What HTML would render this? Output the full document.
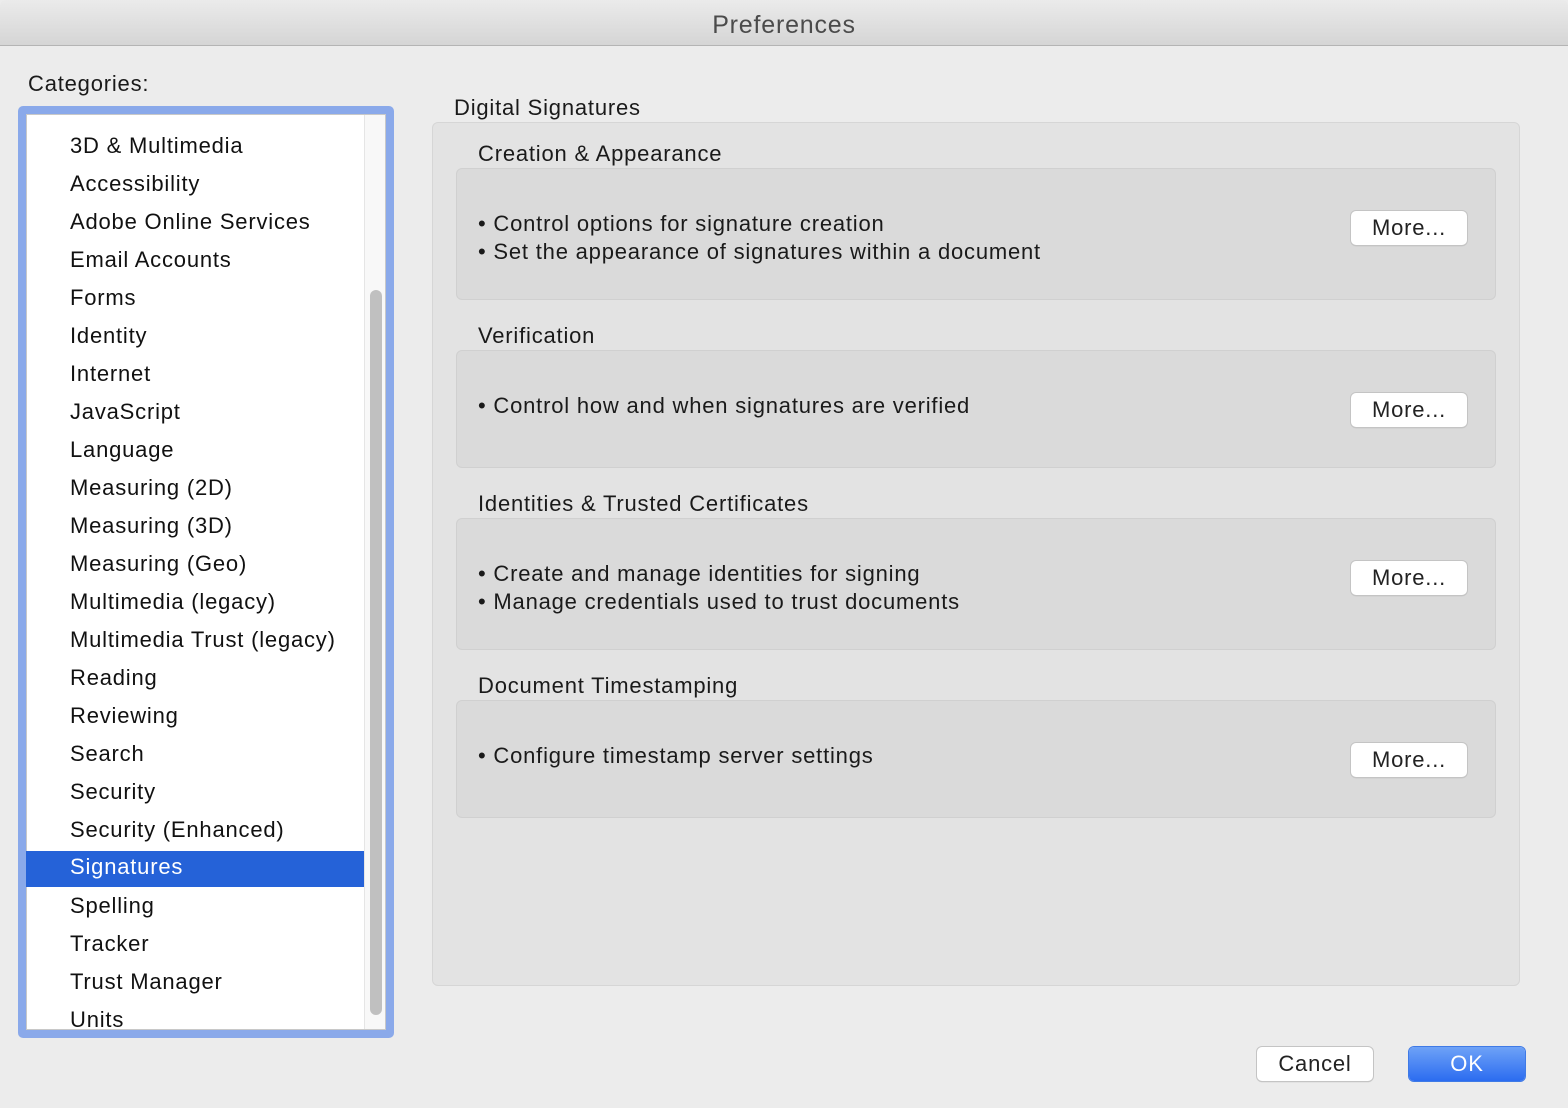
<!DOCTYPE html>
<html><head><style>
*{margin:0;padding:0;box-sizing:border-box}
body{width:1568px;height:1108px;background:#ececec;font-family:"Liberation Sans",sans-serif;color:#1a1a1a;position:relative;overflow:hidden;font-size:22px;letter-spacing:0.8px}
.abs{position:absolute}
.title{left:0;top:0;width:1568px;height:46px;background:linear-gradient(#ebebeb,#d5d5d5);border-bottom:1px solid #b4b4b4;text-align:center;font-size:25px;line-height:50px;color:#4b4b4b;border-radius:6px 6px 0 0}
.t{white-space:nowrap}
.ring{left:18px;top:106px;width:376px;height:932px;border:4px solid #8aa9ea;border-radius:5px;background:#8aa9ea}
.list{left:26px;top:114px;width:360px;height:916px;background:#fff;border:1px solid #c8c8c8;overflow:hidden}
.list div{position:absolute;left:43px;height:38px;line-height:37px;white-space:nowrap;color:#111}
.sel{left:26px;top:851px;width:338px;height:36px;background:#2562d8}
.track{left:364px;top:115px;width:21px;height:914px;background:#f8f8f8;border-left:1px solid #e5e5e5}
.thumb{left:370px;top:290px;width:12px;height:725px;background:#c0c0c0;border-radius:6px}
.grp{left:432px;top:122px;width:1088px;height:864px;background:#e3e3e3;border:1px solid #d6d6d6;border-radius:6px}
.box{left:456px;width:1040px;background:#dadada;border:1px solid #d0d0d0;border-radius:6px}
.btn{width:116px;height:34px;background:#fff;border-radius:5px;box-shadow:0 0 0 1px #c4c4c4,0 1px 1px #aaa;text-align:center;line-height:34px;color:#222}
.ok{background:linear-gradient(#6ea2f7,#2b6cf0);color:#fff;box-shadow:0 0 0 1px #3f7ae6}
</style></head><body>
<div class="abs title">Preferences</div>
<div class="abs t" style="left:28px;top:71px">Categories:</div>
<div class="abs ring"></div>
<div class="abs list">
<div style="top:12px">3D &amp; Multimedia</div>
<div style="top:50px">Accessibility</div>
<div style="top:88px">Adobe Online Services</div>
<div style="top:126px">Email Accounts</div>
<div style="top:164px">Forms</div>
<div style="top:202px">Identity</div>
<div style="top:240px">Internet</div>
<div style="top:278px">JavaScript</div>
<div style="top:316px">Language</div>
<div style="top:354px">Measuring (2D)</div>
<div style="top:392px">Measuring (3D)</div>
<div style="top:430px">Measuring (Geo)</div>
<div style="top:468px">Multimedia (legacy)</div>
<div style="top:506px">Multimedia Trust (legacy)</div>
<div style="top:544px">Reading</div>
<div style="top:582px">Reviewing</div>
<div style="top:620px">Search</div>
<div style="top:658px">Security</div>
<div style="top:696px">Security (Enhanced)</div>
<div style="top:772px">Spelling</div>
<div style="top:810px">Tracker</div>
<div style="top:848px">Trust Manager</div>
<div style="top:886px">Units</div>
</div>
<div class="abs sel"></div>
<div class="abs t" style="left:70px;top:854px;color:#fff">Signatures</div>
<div class="abs track"></div>
<div class="abs thumb"></div>

<div class="abs t" style="left:454px;top:95px">Digital Signatures</div>
<div class="abs grp"></div>

<div class="abs t" style="left:478px;top:141px">Creation &amp; Appearance</div>
<div class="abs box" style="top:168px;height:132px"></div>
<div class="abs t" style="left:478px;top:211px">• Control options for signature creation</div>
<div class="abs t" style="left:478px;top:239px">• Set the appearance of signatures within a document</div>
<div class="abs btn" style="left:1351px;top:211px">More...</div>

<div class="abs t" style="left:478px;top:323px">Verification</div>
<div class="abs box" style="top:350px;height:118px"></div>
<div class="abs t" style="left:478px;top:393px">• Control how and when signatures are verified</div>
<div class="abs btn" style="left:1351px;top:393px">More...</div>

<div class="abs t" style="left:478px;top:491px">Identities &amp; Trusted Certificates</div>
<div class="abs box" style="top:518px;height:132px"></div>
<div class="abs t" style="left:478px;top:561px">• Create and manage identities for signing</div>
<div class="abs t" style="left:478px;top:589px">• Manage credentials used to trust documents</div>
<div class="abs btn" style="left:1351px;top:561px">More...</div>

<div class="abs t" style="left:478px;top:673px">Document Timestamping</div>
<div class="abs box" style="top:700px;height:118px"></div>
<div class="abs t" style="left:478px;top:743px">• Configure timestamp server settings</div>
<div class="abs btn" style="left:1351px;top:743px">More...</div>

<div class="abs btn" style="left:1257px;top:1047px">Cancel</div>
<div class="abs btn ok" style="left:1409px;top:1047px">OK</div>
</body></html>
